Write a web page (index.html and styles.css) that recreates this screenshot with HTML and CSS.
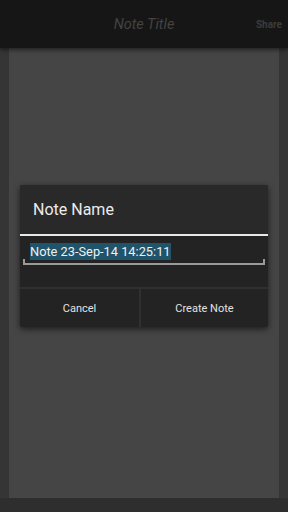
FILE: index.html
```html
<!DOCTYPE html>
<html lang="en">
<head>
    <meta charset="UTF-8">
    <meta name="viewport" content="width=device-width, initial-scale=1.0">
    <title>Note</title>
    <link rel="stylesheet" href="styles.css">
</head>
<body>
    <header class="action-bar">
        <span class="title">Note Title</span>
        <span class="share">Share</span>
    </header>

    <main class="page">
        <div class="paper"></div>
    </main>

    <div class="dialog">
        <div class="dialog-title">Note Name</div>
        <div class="dialog-body">
            <div class="field">
                <span class="selected">Note 23-Sep-14 14:25:11</span>
            </div>
        </div>
        <div class="dialog-buttons">
            <button class="cancel">Cancel</button>
            <button>Create Note</button>
        </div>
    </div>
</body>
</html>
```

FILE: styles.css
```css
body {
    margin: 0;
    width: 288px;
    height: 512px;
    overflow: hidden;
    background-color: #2e2e2e;
    font-family: Roboto, "Liberation Sans", sans-serif;
    display: flex;
    flex-direction: column;
    position: relative;
}

.action-bar {
    height: 48px;
    flex: none;
    background-color: #161616;
    display: flex;
    align-items: center;
    justify-content: center;
    position: relative;
    box-shadow: 0 2px 4px rgba(0, 0, 0, 0.5);
    z-index: 1;
}

.title {
    font-size: 14.5px;
    font-style: italic;
    color: #434343;
}

.share {
    position: absolute;
    right: 6px;
    top: 19px;
    font-size: 10px;
    font-weight: bold;
    color: #3c3c3c;
}

.page {
    height: 450px;
    flex: none;
    background-color: #353535;
    padding: 0 9px;
    display: flex;
}

.paper {
    flex: 1;
    background-color: #454545;
}

.dialog {
    position: absolute;
    left: 20px;
    top: 185px;
    width: 248px;
    background-color: #232323;
    box-shadow: 0 2px 6px rgba(0, 0, 0, 0.6);
    border-radius: 2px;
}

.dialog-title {
    height: 49px;
    padding-left: 13px;
    display: flex;
    align-items: center;
    font-size: 16px;
    color: #ececec;
    background-color: #292929;
    border-bottom: 2px solid #e8e8e8;
}

.dialog-body {
    height: 51px;
    padding: 7px 3px 0;
    box-sizing: border-box;
}

.field {
    height: 20px;
    padding-left: 7px;
    border-bottom: 2px solid #9a9a9a;
    background:
        linear-gradient(#9a9a9a, #9a9a9a) left bottom / 2px 4px no-repeat,
        linear-gradient(#9a9a9a, #9a9a9a) right bottom / 2px 4px no-repeat;
    display: flex;
    align-items: flex-start;
}

.selected {
    font-size: 12.8px;
    line-height: 17px;
    color: #f0f0f0;
    background-color: #20546a;
}

.dialog-buttons {
    display: flex;
    border-top: 2px solid #303030;
    height: 38px;
}

.dialog-buttons button {
    flex: 1;
    background: none;
    border: none;
    font-family: inherit;
    font-size: 11px;
    color: #e2e2e2;
    padding: 0;
}

.dialog-buttons .cancel {
    flex: none;
    width: 121px;
    border-right: 2px solid #303030;
}
```
